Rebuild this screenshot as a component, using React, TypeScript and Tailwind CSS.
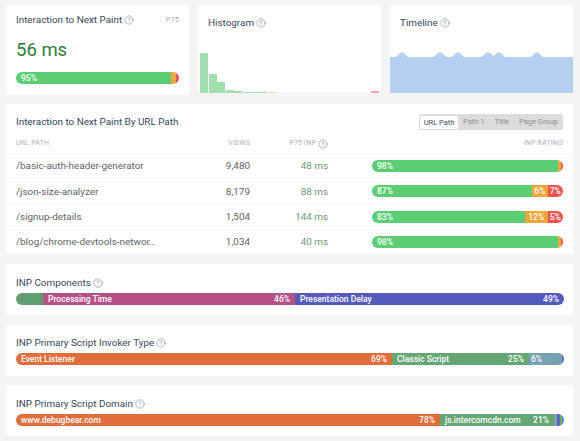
import { CircleHelp } from "lucide-react";

type Seg = { w: number; color: string; label?: string; value?: string; tight?: boolean };

const rows = [
  { path: "/basic-auth-header-generator", views: "9,480", inp: "48 ms", segs: [98, 0, 0] },
  { path: "/json-size-analyzer", views: "8,179", inp: "88 ms", segs: [87, 6, 7] },
  { path: "/signup-details", views: "1,504", inp: "144 ms", segs: [83, 12, 5] },
  { path: "/blog/chrome-devtools-networ…", views: "1,034", inp: "40 ms", segs: [98, 0, 0] },
];

const histogram = [40, 19.5, 11, 3.5, 2, 1.5, 1, 1, 1];

function Help() {
  return <CircleHelp size={10} strokeWidth={1.4} className="ml-[2px] shrink-0 text-[#7b8490]" />;
}

function Title({ children }: { children: string }) {
  return (
    <div className="flex items-center text-[9.9px] leading-[14px] text-[#37465c]">
      {children}
      <Help />
    </div>
  );
}

function RatingBar({ good }: { good: number[] }) {
  const [g, m, p] = good;
  return (
    <div className="flex h-[12px] w-[191px] overflow-hidden rounded-full text-[8.5px] font-medium leading-[12px] text-white">
      <div className="flex-1 bg-[#5bce75] pl-[5px]">{g}%</div>
      {m > 0 ? (
        <>
          <div className={`bg-[#f2a538] text-center ${m === 6 ? "w-[15.5px]" : "w-[22.5px]"}`}>{m}%</div>
          <div className="w-[15.5px] bg-[#ef5350] text-center">{p}%</div>
        </>
      ) : (
        <>
          <div className="w-[3px] bg-[#f2a538]" />
          <div className="w-[2px] bg-[#ef5350]" />
        </>
      )}
    </div>
  );
}

function StackBar({ segs }: { segs: Seg[] }) {
  return (
    <div className="flex h-[12px] w-[548px] overflow-hidden rounded-full text-[8.5px] font-medium leading-[12px] text-white">
      {segs.map((s, i) => (
        <div
          key={i}
          className={`flex shrink-0 justify-between ${s.tight ? "pl-[2px]" : s.label ? "px-[5px]" : ""}`}
          style={{ width: s.w, backgroundColor: s.color }}
        >
          <span>{s.label}</span>
          <span>{s.value}</span>
        </div>
      ))}
    </div>
  );
}

function BarCard({ title, segs }: { title: string; segs: Seg[] }) {
  return (
    <div className="h-[51px] rounded-[3px] bg-white px-[10px] pt-[11.5px]">
      <Title>{title}</Title>
      <div className="mt-[3px]">
        <StackBar segs={segs} />
      </div>
    </div>
  );
}

export default function App() {
  return (
    <div className="h-[441px] w-[580px] overflow-hidden bg-[#f4f4f4] pl-[6px] pr-[7px] pt-[5px] font-['Roboto',sans-serif]">
      <div className="grid grid-cols-[183px_183px_183px] items-start gap-x-[9px]">
        <div className="h-[90px] rounded-[3px] bg-white px-[10px] pt-[8px]">
          <div className="flex items-center justify-between">
            <Title>Interaction to Next Paint</Title>
            <span className="text-[7.5px] text-[#a9afb7]">P75</span>
          </div>
          <div className="mt-[11px] text-[18.5px] leading-[24px] text-[#2a8236]">56 ms</div>
          <div className="mt-[10px] flex h-[12px] overflow-hidden rounded-full text-[8.5px] font-medium leading-[12px] text-white">
            <div className="flex-1 bg-[#5bce75] pl-[5px]">95%</div>
            <div className="w-[5px] bg-[#f2a538]" />
            <div className="w-[3px] bg-[#ef5350]" />
          </div>
        </div>

        <div className="flex h-[88px] flex-col rounded-[3px] bg-white">
          <div className="px-[10px] pt-[10.5px]">
            <Title>Histogram</Title>
          </div>
          <div className="mt-auto flex items-end gap-[0.6px] px-[2px]">
            {histogram.map((h, i) => (
              <div
                key={i}
                className={`w-[8px] ${i === 8 ? "bg-[#f9d9ad]" : "bg-[#9fe0ac]"}`}
                style={{ height: h }}
              />
            ))}
            <div className="ml-auto h-[2px] w-[8px] bg-[#f0a8ad]" />
          </div>
        </div>

        <div className="flex h-[88px] flex-col rounded-[3px] bg-white">
          <div className="px-[10px] pt-[10.5px]">
            <Title>Timeline</Title>
          </div>
          <svg viewBox="0 0 183 41" className="mt-auto block h-[41px] w-full">
            <path
              d="M0 41V5H6L10 1Q12 -0.5 14 1L18 5H44L48 1Q50 -0.5 52 1L56 5H62L66 1Q68 -0.5 70 1L74 5H92L96 1Q98 -0.5 100 1L103.5 4L107 1Q109 -0.5 111 1L115 5H141L145 1Q147 -0.5 149 1L153 5H183V41Z"
              fill="#b5cff0"
            />
          </svg>
        </div>
      </div>

      <div className="mt-[9px] h-[150px] rounded-[3px] bg-white">
        <div className="flex items-center justify-between px-[10px] pt-[10px]">
          <div className="text-[9.9px] leading-[14px] text-[#2f4563]">Interaction to Next Paint By URL Path</div>
          <div className="flex h-[16px] items-center rounded-[3px] bg-[#dcdcdc] py-[1.5px] pl-[1px] pr-[1.5px] text-[7.5px] text-[#8b8f94]">
            <div className="rounded-[2px] bg-white px-[3.5px] leading-[13px] text-[#444c57]">URL Path</div>
            <div className="px-[5px]">Path 1</div>
            <div className="px-[5px]">Title</div>
            <div className="pl-[5px] pr-[3.5px]">Page Group</div>
          </div>
        </div>
        <div className="mt-[4px] flex h-[19px] items-center px-[10px] text-[7px] tracking-[0.2px] text-[#a9afb7]">
          <div className="w-[180px]">URL PATH</div>
          <div className="w-[54px] text-right">VIEWS</div>
          <div className="flex w-[78px] items-center justify-end">
            P75 INP
            <Help />
          </div>
          <div className="flex-1 text-right">INP RATING</div>
        </div>
        {rows.map((r) => (
          <div
            key={r.path}
            className="flex h-[25.3px] items-center border-t border-[#f3f3f3] px-[10px] text-[9.9px] text-[#606467]"
          >
            <div className="w-[180px] whitespace-nowrap pt-[1px]">{r.path}</div>
            <div className="w-[54px] pt-[1px] text-right">{r.views}</div>
            <div className="w-[78px] pt-[1px] text-right text-[#6a9a76]">{r.inp}</div>
            <div className="ml-auto">
              <RatingBar good={r.segs} />
            </div>
          </div>
        ))}
      </div>

      <div className="mt-[10px] flex flex-col gap-[9.5px]">
        <BarCard
          title="INP Components"
          segs={[
            { w: 27, color: "#609e72" },
            { w: 252, color: "#b55088", label: "Processing Time", value: "46%" },
            { w: 269, color: "#545abb", label: "Presentation Delay", value: "49%" },
          ]}
        />
        <BarCard
          title="INP Primary Script Invoker Type"
          segs={[
            { w: 376, color: "#e06d3a", label: "Event Listener", value: "69%" },
            { w: 137, color: "#64a674", label: "Classic Script", value: "25%" },
            { w: 33, color: "#76a1b1", label: "6%", tight: true },
            { w: 2, color: "#5b64bc" },
          ]}
        />
        <BarCard
          title="INP Primary Script Domain"
          segs={[
            { w: 424, color: "#e06d3a", label: "www.debugbear.com", value: "78%" },
            { w: 114, color: "#64a674", label: "js.intercomcdn.com", value: "21%" },
            { w: 3, color: "#76a1b1" },
            { w: 2.5, color: "#5b64bc" },
            { w: 2, color: "#6cb24a" },
            { w: 2.5, color: "#3f8ee8" },
          ]}
        />
      </div>
    </div>
  );
}
